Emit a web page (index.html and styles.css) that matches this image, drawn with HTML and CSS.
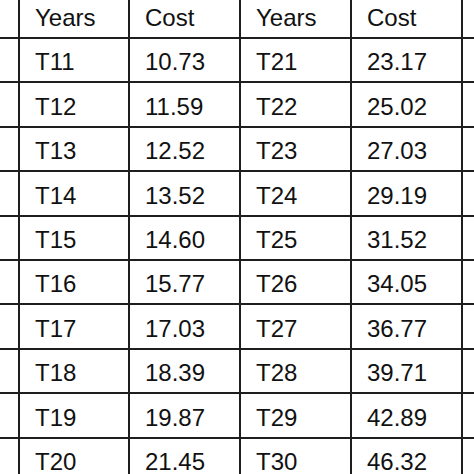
FILE: index.html
```html
<!DOCTYPE html>
<html>
<head>
<meta charset="utf-8">
<link rel="stylesheet" href="styles.css">
</head>
<body>
<div class="frame">
  <div class="grid">
    <div class="c"></div><div class="c">Years</div><div class="c">Cost</div><div class="c">Years</div><div class="c">Cost</div><div class="c"></div>
    <div class="c"></div><div class="c">T11</div><div class="c">10.73</div><div class="c">T21</div><div class="c">23.17</div><div class="c"></div>
    <div class="c"></div><div class="c">T12</div><div class="c">11.59</div><div class="c">T22</div><div class="c">25.02</div><div class="c"></div>
    <div class="c"></div><div class="c">T13</div><div class="c">12.52</div><div class="c">T23</div><div class="c">27.03</div><div class="c"></div>
    <div class="c"></div><div class="c">T14</div><div class="c">13.52</div><div class="c">T24</div><div class="c">29.19</div><div class="c"></div>
    <div class="c"></div><div class="c">T15</div><div class="c">14.60</div><div class="c">T25</div><div class="c">31.52</div><div class="c"></div>
    <div class="c"></div><div class="c">T16</div><div class="c">15.77</div><div class="c">T26</div><div class="c">34.05</div><div class="c"></div>
    <div class="c"></div><div class="c">T17</div><div class="c">17.03</div><div class="c">T27</div><div class="c">36.77</div><div class="c"></div>
    <div class="c"></div><div class="c">T18</div><div class="c">18.39</div><div class="c">T28</div><div class="c">39.71</div><div class="c"></div>
    <div class="c"></div><div class="c">T19</div><div class="c">19.87</div><div class="c">T29</div><div class="c">42.89</div><div class="c"></div>
    <div class="c"></div><div class="c">T20</div><div class="c">21.45</div><div class="c">T30</div><div class="c">46.32</div><div class="c"></div>
  </div>
</div>
</body>
</html>
```
FILE: styles.css
```css
html, body {
  margin: 0;
  padding: 0;
  background: #fff;
}
.frame {
  width: 474px;
  height: 474px;
  overflow: hidden;
}
.grid {
  display: grid;
  grid-template-columns: 18px 108px 109px 109px 109px 40px;
  grid-template-rows: 37px repeat(10, 42.4px);
  gap: 2px;
  background: #1e1e1e;
  font-family: "Liberation Sans", Arial, sans-serif;
  font-size: 24px;
  color: #111;
}
.c {
  background: #fff;
  display: flex;
  align-items: flex-end;
  padding: 0 0 7px 15px;
  line-height: 24px;
  white-space: nowrap;
  overflow: hidden;
}
```
